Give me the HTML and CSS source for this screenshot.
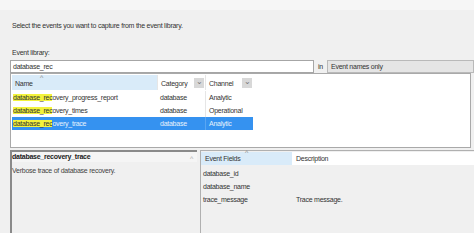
FILE: index.html
```html
<!DOCTYPE html>
<html lang="en">

<head>
    <meta charset="UTF-8">
    <title>Events</title>
    <link rel="stylesheet" href="styles.css">
</head>

<body>
    <div class="page">
        <div class="topband"></div>
        <p class="intro">Select the events you want to capture from the event library.</p>

        <p class="label">Event library:</p>
        <div class="search">
            <div class="box">database_rec</div>
            <span class="in">in</span>
            <div class="combo">Event names only</div>
        </div>

        <div class="list">
            <div class="row head">
                <div class="col name">Name<span class="caret">^</span></div>
                <div class="col cat">Category<span class="drop">&#8964;</span></div>
                <div class="col chan">Channel<span class="drop">&#8964;</span></div>
            </div>
            <div class="row">
                <div class="col name"><mark>database_rec</mark>overy_progress_report</div>
                <div class="col cat">database</div>
                <div class="col chan">Analytic</div>
            </div>
            <div class="row">
                <div class="col name"><mark>database_rec</mark>overy_times</div>
                <div class="col cat">database</div>
                <div class="col chan">Operational</div>
            </div>
            <div class="row selected">
                <div class="col name"><mark>database_rec</mark>overy_trace</div>
                <div class="col cat">database</div>
                <div class="col chan">Analytic</div>
            </div>
        </div>

        <div class="details">
            <div class="info">
                <div class="info-title">database_recovery_trace <span class="up">^</span></div>
                <p class="info-text">Verbose trace of database recovery.</p>
            </div>
            <div class="fields">
                <div class="frow fhead">
                    <div class="fcol fname">Event Fields<span class="caret">^</span></div>
                    <div class="fcol fdesc">Description</div>
                </div>
                <div class="frow">
                    <div class="fcol fname">database_id</div>
                    <div class="fcol fdesc"></div>
                </div>
                <div class="frow">
                    <div class="fcol fname">database_name</div>
                    <div class="fcol fdesc"></div>
                </div>
                <div class="frow">
                    <div class="fcol fname">trace_message</div>
                    <div class="fcol fdesc">Trace message.</div>
                </div>
            </div>
        </div>
    </div>
</body>

</html>
```

FILE: styles.css
```css
body {
    margin: 0;
    background: #f0f0f0;
    font-family: "Liberation Sans", Arial, sans-serif;
    font-size: 7px;
    letter-spacing: -0.25px;
    color: #333;
}
p {
    margin: 0;
}
.page {
    width: 474px;
    height: 233px;
    overflow: hidden;
}
.topband {
    height: 10px;
    background: #f6f6f6;
}
.intro {
    padding: 12px 0 0 12px;
    height: 8px;
    line-height: 8px;
}
.label {
    padding: 19px 0 0 12px;
    height: 8px;
    line-height: 8px;
}

/*---- search row ----*/
.search {
    display: flex;
    align-items: center;
    height: 13px;
    margin-top: 3px;
    padding-left: 10px;
}
.search .box {
    width: 304px;
    height: 13px;
    line-height: 11px;
    padding-left: 2px;
    background: #fff;
    border: 1px solid #a6a6a6;
    box-sizing: border-box;
}
.search .in {
    width: 13px;
    padding-left: 4px;
    box-sizing: border-box;
}
.search .combo {
    flex: 1;
    height: 13px;
    line-height: 11px;
    padding-left: 3px;
    background: #e5e5e5;
    border: 1px solid #b9b9b9;
    box-sizing: border-box;
}

/*---- event list ----*/
.list {
    margin-left: 10px;
    width: 461px;
    height: 75px;
    box-sizing: border-box;
    background: #fff;
    border: 1px solid #a9a9a9;
    padding: 1px 0 0 1px;
}
.row {
    display: flex;
    height: 13px;
    line-height: 13px;
}
.row.head {
    height: 15px;
    line-height: 17px;
    margin-bottom: 1px;
}
.col {
    position: relative;
    padding-left: 3px;
    white-space: nowrap;
    box-sizing: border-box;
}
.col.name {
    width: 145px;
    padding-left: 1px;
}
.col.cat {
    width: 48px;
}
.col.chan {
    width: 48px;
    border-left: 1px solid #e6e6e6;
}
.head .col.name {
    background: #d9ebf9;
    padding-left: 3px;
}
.head .col.cat {
    border-left: 1px solid #e6e6e6;
}
.caret {
    position: absolute;
    left: 28px;
    top: -6px;
    color: #888;
}
.drop {
    position: absolute;
    right: 1px;
    top: 3px;
    width: 10px;
    height: 10px;
    line-height: 7px;
    text-align: center;
    letter-spacing: 0;
    background: #d8d8d8;
    color: #777;
    font-size: 8px;
}
.row.selected {
    width: 241px;
    background: #3592f0;
    color: #e8f2fc;
}
.row.selected .col.chan {
    border-left-color: #5aa6f2;
}
mark {
    background: #f3f33c;
    color: #333;
}

/*---- details ----*/
.details {
    display: flex;
    margin-top: 2px;
    height: 83px;
}
.info {
    margin-left: 10px;
    width: 187px;
    box-sizing: border-box;
    border-top: 2px solid #8a8a8a;
    border-left: 2px solid #8a8a8a;
    background: #f0f0f0;
}
.info-title {
    position: relative;
    font-weight: bold;
    color: #1a1a1a;
    height: 10px;
    line-height: 10px;
    background: #f5f5f5;
}
.info-title .up {
    position: absolute;
    right: 4px;
    top: 2px;
    color: #aaa;
    font-weight: normal;
}
.info-text {
    padding: 5px 0 0 0;
    color: #444;
}
.fields {
    margin-left: 3px;
    flex: 1;
    border-top: 1px solid #b0b0b0;
    border-left: 1px solid #b0b0b0;
    padding-top: 1px;
}
.frow {
    display: flex;
    height: 13px;
    line-height: 13px;
}
.frow.fhead {
    height: 13px;
    line-height: 14px;
    margin-bottom: 2px;
}
.fcol {
    position: relative;
    white-space: nowrap;
    box-sizing: border-box;
}
.fname {
    width: 91px;
    padding-left: 2px;
}
.fdesc {
    padding-left: 4px;
    flex: 1;
}
.fhead .fname {
    background: #d9ebf9;
    padding-left: 4px;
}
.fhead .fdesc {
    background: #fff;
}
.fhead .caret {
    left: 44px;
}
```
